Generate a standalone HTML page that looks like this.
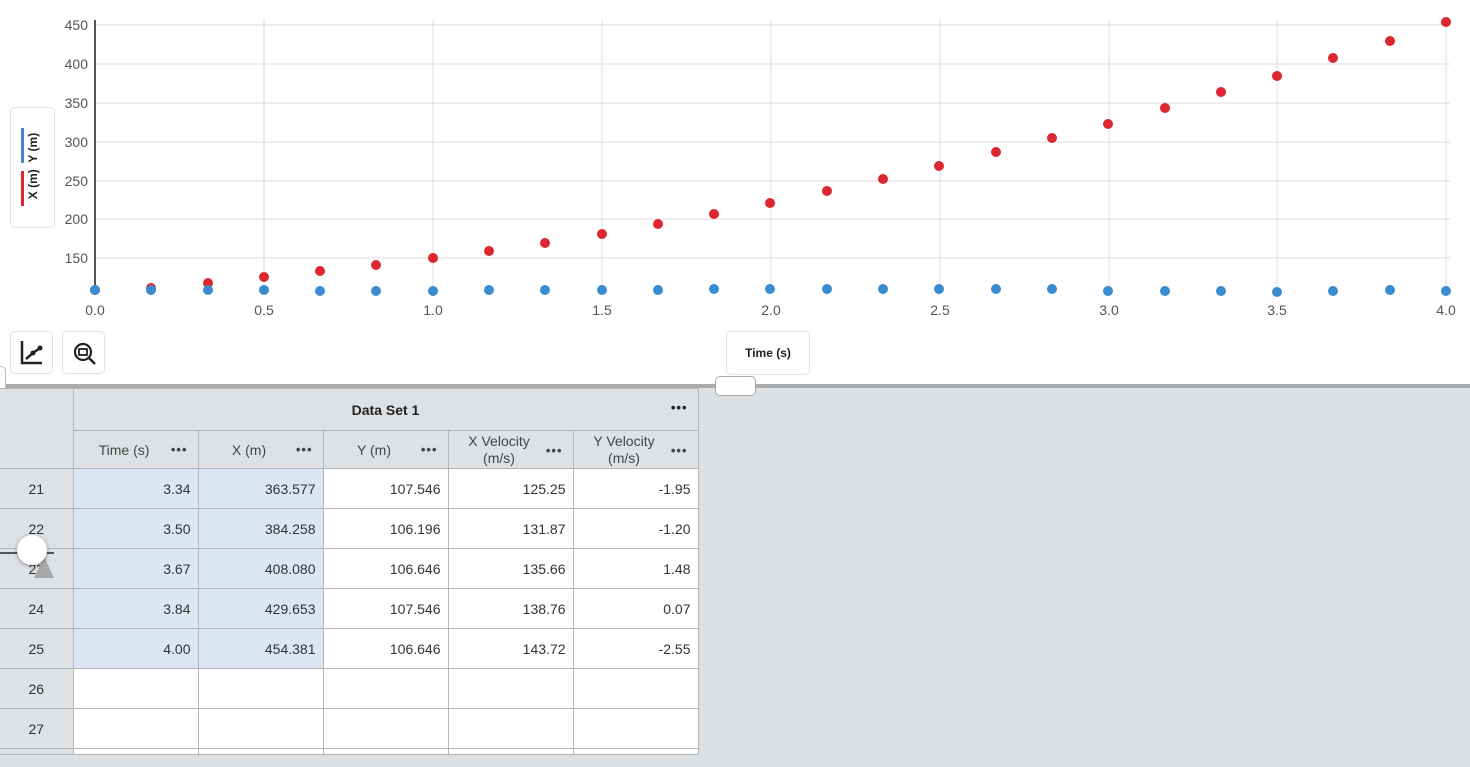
<!DOCTYPE html>
<html><head><meta charset="utf-8"><style>
body{margin:0;width:1470px;height:767px;overflow:hidden;background:#fff;font-family:"Liberation Sans",sans-serif;position:relative}
.abs{position:absolute}
.btn{position:absolute;background:#fff;border:1px solid #e2e2e2;border-radius:5px}
table{border-collapse:collapse;position:absolute;left:0;top:388px;font-size:14px;color:#333}
td{border:1px solid #b5b5b5;height:40px;padding:0 7px;box-sizing:border-box}
.rn{background:#dfe2e5;text-align:center;width:73px;border-left:none}
.sel{background:#dae6f3;text-align:right}
.w{background:#fff;text-align:right}
.h{background:#dfe2e5;text-align:center;font-size:14px;position:relative;color:#444;padding-right:30px}
.dots{position:absolute;right:10px;top:11px;font-weight:bold;letter-spacing:1px;font-size:13px}
</style></head><body>
<div class="abs" style="left:0;top:388px;width:1470px;height:379px;background:#dee1e4"></div>
<svg class="abs" style="left:0;top:0" width="1470" height="384">
<g stroke="#dcdcdc" stroke-width="1">
<line x1="95" y1="25" x2="1450" y2="25"/><line x1="95" y1="64" x2="1450" y2="64"/><line x1="95" y1="103" x2="1450" y2="103"/><line x1="95" y1="142" x2="1450" y2="142"/><line x1="95" y1="181" x2="1450" y2="181"/><line x1="95" y1="219" x2="1450" y2="219"/><line x1="95" y1="258" x2="1450" y2="258"/>
<line x1="264" y1="20" x2="264" y2="292"/><line x1="433" y1="20" x2="433" y2="292"/><line x1="602" y1="20" x2="602" y2="292"/><line x1="771" y1="20" x2="771" y2="292"/><line x1="940" y1="20" x2="940" y2="292"/><line x1="1109" y1="20" x2="1109" y2="292"/><line x1="1277" y1="20" x2="1277" y2="292"/><line x1="1446" y1="20" x2="1446" y2="292"/>
</g>
<line x1="95" y1="20" x2="95" y2="292" stroke="#555" stroke-width="2"/>
<g font-size="14" fill="#555" text-anchor="end">
<text x="88" y="30">450</text><text x="88" y="69">400</text><text x="88" y="108">350</text><text x="88" y="147">300</text><text x="88" y="186">250</text><text x="88" y="224">200</text><text x="88" y="263">150</text></g>
<g font-size="14" fill="#555" text-anchor="middle">
<text x="95" y="315">0.0</text><text x="264" y="315">0.5</text><text x="433" y="315">1.0</text><text x="602" y="315">1.5</text><text x="771" y="315">2.0</text><text x="940" y="315">2.5</text><text x="1109" y="315">3.0</text><text x="1277" y="315">3.5</text><text x="1446" y="315">4.0</text></g>
<g fill="#dc2630">
<circle cx="95" cy="290" r="5"/><circle cx="151" cy="288" r="5"/><circle cx="208" cy="283" r="5"/><circle cx="264" cy="277" r="5"/><circle cx="320" cy="271" r="5"/><circle cx="376" cy="265" r="5"/><circle cx="433" cy="258" r="5"/><circle cx="489" cy="251" r="5"/><circle cx="545" cy="243" r="5"/><circle cx="602" cy="234" r="5"/><circle cx="658" cy="224" r="5"/><circle cx="714" cy="214" r="5"/><circle cx="770" cy="203" r="5"/><circle cx="827" cy="191" r="5"/><circle cx="883" cy="179" r="5"/><circle cx="939" cy="166" r="5"/><circle cx="996" cy="152" r="5"/><circle cx="1052" cy="138" r="5"/><circle cx="1108" cy="124" r="5"/><circle cx="1165" cy="108" r="5"/><circle cx="1221" cy="92" r="5"/><circle cx="1277" cy="76" r="5"/><circle cx="1333" cy="58" r="5"/><circle cx="1390" cy="41" r="5"/><circle cx="1446" cy="22" r="5"/></g>
<g fill="#3a8bd0">
<circle cx="95" cy="290" r="5"/><circle cx="151" cy="290" r="5"/><circle cx="208" cy="290" r="5"/><circle cx="264" cy="290" r="5"/><circle cx="320" cy="291" r="5"/><circle cx="376" cy="291" r="5"/><circle cx="433" cy="291" r="5"/><circle cx="489" cy="290" r="5"/><circle cx="545" cy="290" r="5"/><circle cx="602" cy="290" r="5"/><circle cx="658" cy="290" r="5"/><circle cx="714" cy="289" r="5"/><circle cx="770" cy="289" r="5"/><circle cx="827" cy="289" r="5"/><circle cx="883" cy="289" r="5"/><circle cx="939" cy="289" r="5"/><circle cx="996" cy="289" r="5"/><circle cx="1052" cy="289" r="5"/><circle cx="1108" cy="291" r="5"/><circle cx="1165" cy="291" r="5"/><circle cx="1221" cy="291" r="5"/><circle cx="1277" cy="292" r="5"/><circle cx="1333" cy="291" r="5"/><circle cx="1390" cy="290" r="5"/><circle cx="1446" cy="291" r="5"/></g>
</svg>
<div class="btn" style="left:10px;top:107px;width:43px;height:119px">
<div class="abs" style="left:10px;top:20px;width:3px;height:35px;background:#3a8bd0"></div>
<div class="abs" style="left:10px;top:63px;width:3px;height:35px;background:#dc2630"></div>
<div class="abs" style="left:-22px;top:50px;width:90px;height:16px;transform:rotate(-90deg);font-size:12px;font-weight:bold;color:#222;white-space:nowrap;text-align:center">X (m)&nbsp;&nbsp;Y (m)</div>
</div>
<div class="btn" style="left:10px;top:331px;width:41px;height:41px">
<svg width="41" height="41"><path d="M11 9V31H31" stroke="#222" stroke-width="2.5" fill="none"/><path d="M15 27L22 21L29 16" stroke="#222" stroke-width="2.5" fill="none"/><circle cx="22" cy="21" r="2.5" fill="#222"/><circle cx="29" cy="16" r="2.5" fill="#222"/></svg></div>
<div class="btn" style="left:62px;top:331px;width:41px;height:41px">
<svg width="41" height="41"><circle cx="20" cy="20" r="8" stroke="#222" stroke-width="2.2" fill="none"/><rect x="16" y="17" width="8" height="6" stroke="#222" stroke-width="1.8" fill="none"/><path d="M26 26L32 32" stroke="#222" stroke-width="2.5"/></svg></div>
<div class="btn" style="left:726px;top:331px;width:82px;height:42px;font-size:12px;font-weight:bold;color:#222;text-align:center;line-height:42px">Time (s)</div>
<div class="abs" style="left:0;top:384px;width:1470px;height:4px;background:#a9abad"></div>
<div class="btn" style="left:715px;top:376px;width:39px;height:18px;border-color:#aaa"></div>
<div class="btn" style="left:-6px;top:366px;width:10px;height:38px;border-color:#bbb"></div>
<table>
<tr><td class="rn" rowspan="2" style="height:80px"></td><td class="h" colspan="5" style="height:42px;font-weight:bold;color:#222;padding-right:7px">Data Set 1<span class="dots">•••</span></td></tr>
<tr>
<td class="h" style="width:125px;height:38px">Time (s)<span class="dots">•••</span></td>
<td class="h" style="width:125px;height:38px">X (m)<span class="dots">•••</span></td>
<td class="h" style="width:125px;height:38px">Y (m)<span class="dots">•••</span></td>
<td class="h" style="width:125px;height:38px;line-height:17px">X Velocity<br>(m/s)<span class="dots">•••</span></td>
<td class="h" style="width:125px;height:38px;line-height:17px">Y Velocity<br>(m/s)<span class="dots">•••</span></td></tr>
<tr><td class="rn">21</td><td class="sel">3.34</td><td class="sel">363.577</td><td class="w">107.546</td><td class="w">125.25</td><td class="w">-1.95</td></tr>
<tr><td class="rn">22</td><td class="sel">3.50</td><td class="sel">384.258</td><td class="w">106.196</td><td class="w">131.87</td><td class="w">-1.20</td></tr>
<tr><td class="rn">23</td><td class="sel">3.67</td><td class="sel">408.080</td><td class="w">106.646</td><td class="w">135.66</td><td class="w">1.48</td></tr>
<tr><td class="rn">24</td><td class="sel">3.84</td><td class="sel">429.653</td><td class="w">107.546</td><td class="w">138.76</td><td class="w">0.07</td></tr>
<tr><td class="rn">25</td><td class="sel">4.00</td><td class="sel">454.381</td><td class="w">106.646</td><td class="w">143.72</td><td class="w">-2.55</td></tr>
<tr><td class="rn">26</td><td class="w"></td><td class="w"></td><td class="w"></td><td class="w"></td><td class="w"></td></tr>
<tr><td class="rn">27</td><td class="w"></td><td class="w"></td><td class="w"></td><td class="w"></td><td class="w"></td></tr>
<tr><td class="rn" style="height:6px"></td><td class="w" style="height:6px"></td><td class="w" style="height:6px"></td><td class="w" style="height:6px"></td><td class="w" style="height:6px"></td><td class="w" style="height:6px"></td></tr>
</table>
<div class="abs" style="left:0;top:552px;width:54px;height:2px;background:#555"></div>
<div class="abs" style="left:34px;top:556px;width:0;height:0;border-left:10px solid transparent;border-right:10px solid transparent;border-bottom:22px solid #a9a9a9"></div>
<div class="abs" style="left:17px;top:535px;width:30px;height:30px;border-radius:50%;background:#fff;box-shadow:0 1px 4px rgba(0,0,0,.4)"></div>
</body></html>
